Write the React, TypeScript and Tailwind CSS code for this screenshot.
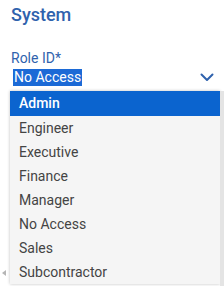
import React from 'react'

const roles = [
  'Admin',
  'Engineer',
  'Executive',
  'Finance',
  'Manager',
  'No Access',
  'Sales',
  'Subcontractor',
]

const Chevron = () => (
  <svg width="14" height="9" viewBox="0 0 14 9" fill="none">
    <path
      d="M1.5 1.5 L7 7 L12.5 1.5"
      stroke="#2f62ad"
      strokeWidth="2"
      strokeLinecap="round"
      strokeLinejoin="round"
    />
  </svg>
)

const App = () => {
  const selected = 'Admin'
  return (
    <div className="relative w-[224px] h-[286px] overflow-hidden bg-white font-['Roboto',sans-serif]">
      <div className="pl-[11px] pt-[4px]">
        <h2 className="text-[18px] leading-[22px] font-medium text-[#2f62ad]">
          System
        </h2>
        <label className="block mt-[24px] text-[14px] leading-[17px] text-[#2f62ad]">
          Role ID*
        </label>
        <div className="mt-[2px] flex items-center justify-between pl-[2px] pr-[10px]">
          <span className="bg-[#1c6ad6] text-white text-[14px] leading-[17px] px-[1px]">
            No Access
          </span>
          <Chevron />
        </div>
        <ul className="mt-[5px] ml-[-1px] w-[210px] bg-[#f5f5f5] shadow-[0_0_3px_rgba(0,0,0,0.25)]">
          {roles.map((role) => (
            <li
              key={role}
              className={
                role === selected
                  ? 'h-[25px] pl-[9px] flex items-center text-[14px] font-medium text-white bg-[#0b64cf]'
                  : 'h-[24px] pl-[9px] flex items-center text-[14px] text-[#444]'
              }
            >
              {role}
            </li>
          ))}
        </ul>
      </div>
      <div className="absolute right-0 top-[91px] bottom-0 w-[4px] bg-[#e4e4e4]" />
      <div className="absolute left-[2px] top-[270px] w-0 h-0 border-y-[3px] border-y-transparent border-r-[4px] border-r-[#b5b5b5]" />
    </div>
  )
}

export default App
